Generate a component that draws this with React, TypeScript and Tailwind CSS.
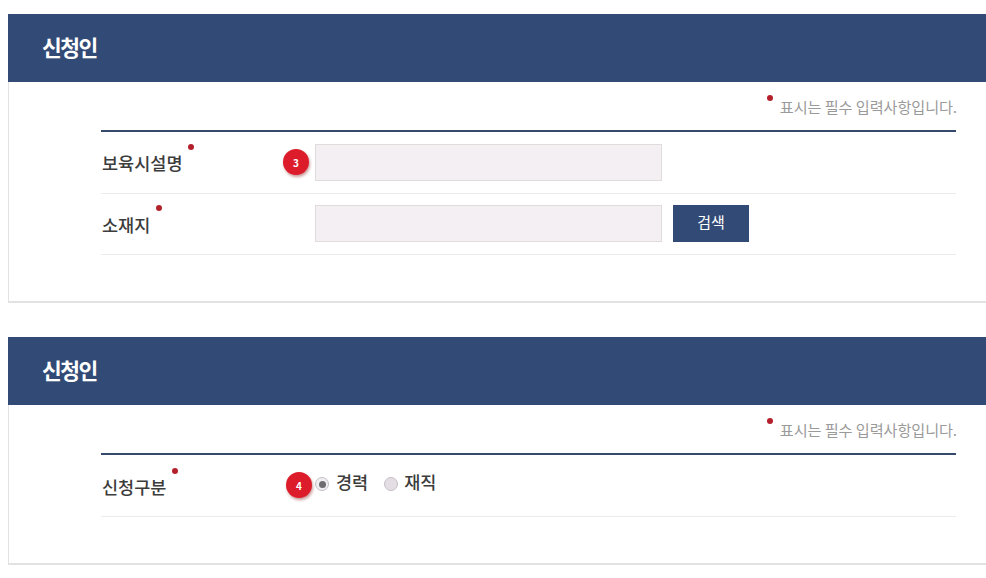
const font = { fontFamily: '"Noto Sans CJK KR", "Liberation Sans", sans-serif' };

function Dot({ className }: { className: string }) {
  return <span className={`absolute h-[6px] w-[6px] rounded-full bg-[#b3202c] ${className}`} />;
}

function Badge({ n, className }: { n: number; className: string }) {
  return (
    <span className={`absolute flex h-[26px] w-[26px] items-center justify-center rounded-full bg-[#dc1c2a] text-[10px] font-bold text-white shadow-[1px_2px_3px_rgba(120,0,0,0.4)] ${className}`}>
      {n}
    </span>
  );
}

function Panel({ bottom, children }: { bottom: string; children: React.ReactNode }) {
  return (
    <section className={`border-b-2 border-l border-[#e2e2e2] ${bottom}`}>
      <h2 className="-ml-px flex h-[68px] items-center bg-[#324b76] pb-[1px] pl-[34px] text-[21.5px] font-bold tracking-[-1.5px] text-white">신청인</h2>
      <div className="pl-[92px] pr-[30px]">
        <p className="relative -mr-px flex h-[48px] items-end justify-end pb-[16px] text-[15.2px] leading-none tracking-[-0.1px] text-[#9a9a9a]">
          <Dot className="right-[184px] top-[13px]" />
          표시는 필수 입력사항입니다.
        </p>
        <div className="border-t-2 border-[#34496b]">{children}</div>
      </div>
    </section>
  );
}

function Row({ label, dot, badge, children, h, labelPad }: { label: string; dot: string; badge?: React.ReactNode; children: React.ReactNode; h: string; labelPad: string }) {
  return (
    <div className={`relative flex items-center border-b border-[#ebebeb] ${h}`}>
      <span className={`w-[214px] pl-px text-[17.5px] font-medium tracking-normal text-[#3c3c3c] ${labelPad}`}>{label}</span>
      <Dot className={dot} />
      {badge}
      {children}
    </div>
  );
}

function Field() {
  return <input className="h-[37px] w-[347px] border border-[#e0dcdc] bg-[#f4eff3]" />;
}

function Radio({ on }: { on?: boolean }) {
  return (
    <span className={`flex h-[14px] w-[14px] items-center justify-center rounded-full border border-[#c4c0c6] ${on ? 'bg-[#f0eef0]' : 'bg-[#e4dde4]'}`}>
      {on && <span className="h-[7px] w-[7px] rounded-full bg-[#6e6e72]" />}
    </span>
  );
}

export default function App() {
  return (
    <div className="h-[578px] w-[986px] overflow-hidden bg-white pl-[8px] pt-[14px]" style={font}>
      <Panel bottom="h-[289px]">
        <Row label="보육시설명" h="h-[62px]" labelPad="pt-[1px]" dot="left-[87px] top-[12px]" badge={<Badge n={3} className="left-[182px] top-[17px]" />}>
          <Field />
        </Row>
        <Row label="소재지" h="h-[61px] pb-[1px]" labelPad="pt-[3px]" dot="left-[55px] top-[11px]">
          <Field />
          <button className="ml-[11px] h-[37px] w-[76px] bg-[#324b76] pb-[2px] text-[15px] text-white">검색</button>
        </Row>
      </Panel>
      <div className="h-[34px]" />
      <Panel bottom="h-[228px]">
        <Row label="신청구분" h="h-[62px]" labelPad="pt-[3px]" dot="left-[71px] top-[13px]" badge={<Badge n={4} className="left-[185px] top-[17px]" />}>
          <div className="flex items-center pb-[3px] text-[17.5px] font-medium text-[#3c3c3c]">
            <Radio on />
            <span className="ml-[7px] mr-[16px] pb-[3px]">경력</span>
            <Radio />
            <span className="ml-[6px] pb-[3px]">재직</span>
          </div>
        </Row>
      </Panel>
    </div>
  );
}
